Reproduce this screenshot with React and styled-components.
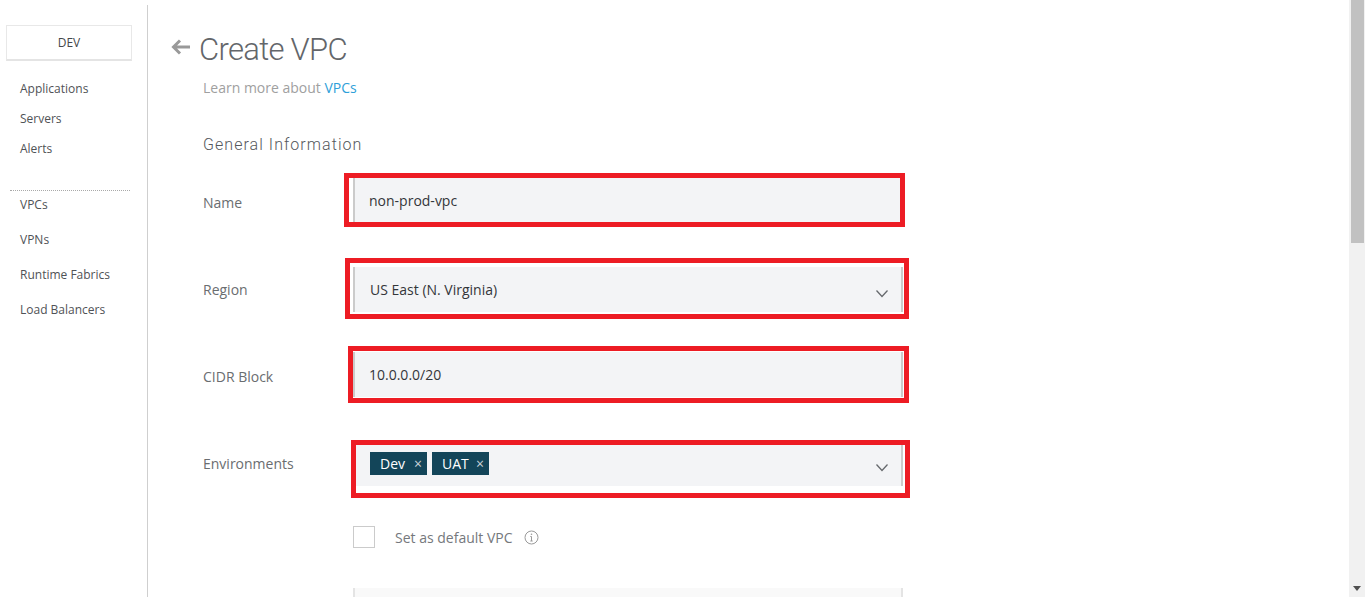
import React from "react";
import styled, { createGlobalStyle } from "styled-components";

const Global = createGlobalStyle`
  html, body { margin: 0; padding: 0; height: 100%; background: #fff; overflow: hidden; }
  #root { height: 100%; }
  * { box-sizing: border-box; }
`;

const Page = styled.div`
  display: flex;
  height: 597px;
  width: 1365px;
  overflow: hidden;
  font-family: "Open Sans", sans-serif;
  color: #55585c;
`;

const Sidebar = styled.aside`
  flex: 0 0 148px;
  margin-top: 5px;
  padding: 20px 15px 0 6px;
  border-right: 1px solid #cfcfcf;
`;

const EnvBox = styled.div`
  width: 126px;
  height: 36px;
  display: flex;
  align-items: center;
  justify-content: center;
  font-size: 12px;
  color: #44474b;
  border: 1px solid #e8e8e8;
  border-bottom: 2px solid #e4e4e4;
  padding-bottom: 1px;
`;

const NavList = styled.nav`
  display: flex;
  flex-direction: column;
  margin-top: ${(p) => p.$top}px;
  padding-left: 14px;
`;

const NavItem = styled.a`
  height: ${(p) => p.$h}px;
  line-height: ${(p) => p.$h}px;
  font-size: 12px;
  color: #4f5256;
  white-space: nowrap;
`;

const Divider = styled.hr`
  width: 120px;
  margin: 26px 0 0 4px;
  border: 0;
  border-top: 1px dotted #a9a9a9;
`;

const Main = styled.main`
  flex: 1;
  padding: 29px 0 0 23px;
`;

const TitleRow = styled.div`
  display: flex;
  align-items: center;
  height: 40px;
`;

const BackIcon = styled.svg`
  width: 20px;
  height: 16px;
  margin-right: 8px;
  margin-top: -4px;
  color: #999;
`;

const Title = styled.h1`
  margin: 2px 0 0;
  font-family: "Roboto", sans-serif;
  font-weight: 300;
  font-size: 31px;
  letter-spacing: -0.7px;
  line-height: 40px;
  color: #63666a;
`;

const Body = styled.div`
  padding-left: 32px;
`;

const Learn = styled.p`
  margin: 9px 0 0;
  font-size: 14px;
  line-height: 20px;
  color: #a0a0a0;
`;

const LearnLink = styled.a`
  color: #2f9fd9;
`;

const Section = styled.h2`
  margin: 36px 0 0;
  font-family: "Roboto", sans-serif;
  font-weight: 300;
  font-size: 16px;
  letter-spacing: 1.05px;
  line-height: 22px;
  color: #55585c;
`;

const Row = styled.div`
  display: flex;
  align-items: center;
  height: 45px;
  margin-top: ${(p) => p.$top}px;
`;

const Label = styled.label`
  flex: 0 0 150px;
  margin-top: ${(p) => p.$drop || 0}px;
  font-size: 14px;
  color: #6a6d70;
`;

const Field = styled.div`
  position: relative;
  display: flex;
  align-items: center;
  width: 550px;
  height: 45px;
  padding: 0 12px 0 ${(p) => p.$pad}px;
  background: #f3f4f6;
  border-left: 2px solid #cbcbcb;
  border-right: 2px solid #cbcbcb;
  font-size: 14px;
  color: #33363a;
`;

const Highlight = styled.span`
  position: absolute;
  top: ${(p) => p.$t}px;
  right: ${(p) => p.$r}px;
  bottom: ${(p) => p.$b}px;
  left: ${(p) => p.$l}px;
  border: 5px solid #ed1c24;
  pointer-events: none;
`;

const Chevron = styled.svg`
  margin-left: auto;
  width: 14px;
  height: 9px;
  margin-top: 8px;
  color: #66696d;
`;

const Tag = styled.span`
  display: flex;
  align-items: center;
  justify-content: space-between;
  width: 57px;
  height: 23px;
  margin-right: 5px;
  padding: 0 5px 0 10px;
  background: #134559;
  color: #fff;
  font-size: 14px;
`;

const TagX = styled.span`
  font-size: 14px;
  color: #c9d3d8;
`;

const CheckRow = styled.div`
  display: flex;
  align-items: center;
  margin: 40px 0 0 150px;
  height: 22px;
`;

const Check = styled.span`
  width: 22px;
  height: 22px;
  margin-right: 20px;
  border: 1px solid #cbcbcb;
  background: #fff;
`;

const CheckLabel = styled.span`
  font-size: 14px;
  color: #75787c;
`;

const InfoIcon = styled.svg`
  width: 15px;
  height: 15px;
  margin-left: 11px;
  color: #9a9a9a;
`;

const NextField = styled.div`
  width: 550px;
  height: 60px;
  margin: 40px 0 0 150px;
  background: #f9f9f9;
  border-left: 2px solid #e4e4e4;
  border-right: 2px solid #e4e4e4;
`;

const ScrollTrack = styled.div`
  position: relative;
  flex: 0 0 16px;
  background: #f1f1f1;
`;

const ScrollThumb = styled.div`
  width: 13px;
  height: 243px;
  margin-left: 2px;
  background: #c1c1c1;
`;

const ScrollArrow = styled.svg`
  position: absolute;
  left: 4px;
  bottom: 6px;
  width: 8px;
  height: 5px;
  color: #505050;
`;

const ChevronDown = () => (
  <Chevron viewBox="0 0 14 9">
    <path d="M1.5 1.5 L7 7.5 L12.5 1.5" fill="none" stroke="currentColor" strokeWidth="1.3" />
  </Chevron>
);

export default function App() {
  return (
    <Page>
      <Global />
      <Sidebar>
        <EnvBox>DEV</EnvBox>
        <NavList $top={13}>
          <NavItem $h={30}>Applications</NavItem>
          <NavItem $h={30}>Servers</NavItem>
          <NavItem $h={30}>Alerts</NavItem>
        </NavList>
        <Divider />
        <NavList $top={-4}>
          <NavItem $h={35}>VPCs</NavItem>
          <NavItem $h={35}>VPNs</NavItem>
          <NavItem $h={35}>Runtime Fabrics</NavItem>
          <NavItem $h={35}>Load Balancers</NavItem>
        </NavList>
      </Sidebar>
      <Main>
        <TitleRow>
          <BackIcon viewBox="0 0 20 16">
            <path d="M19 8 H3 M9 1.5 L2.5 8 L9 14.5" fill="none" stroke="currentColor" strokeWidth="3" />
          </BackIcon>
          <Title>Create VPC</Title>
        </TitleRow>
        <Body>
          <Learn>
            Learn more about <LearnLink>VPCs</LearnLink>
          </Learn>
          <Section>General Information</Section>
          <Row $top={22}>
            <Label $drop={4}>Name</Label>
            <Field $pad={14}>
              non-prod-vpc
              <Highlight $t={-5} $r={-4} $b={-4} $l={-11} />
            </Field>
          </Row>
          <Row $top={44}>
            <Label>Region</Label>
            <Field $pad={15}>
              US East (N. Virginia)
              <ChevronDown />
              <Highlight $t={-9} $r={-8} $b={-7} $l={-10} />
            </Field>
          </Row>
          <Row $top={40}>
            <Label $drop={4}>CIDR Block</Label>
            <Field $pad={14}>
              10.0.0.0/20
              <Highlight $t={-6} $r={-8} $b={-6} $l={-7} />
            </Field>
          </Row>
          <Row $top={44}>
            <Label>Environments</Label>
            <Field $pad={15}>
              <Tag>
                Dev <TagX>×</TagX>
              </Tag>
              <Tag>
                UAT <TagX>×</TagX>
              </Tag>
              <ChevronDown />
              <Highlight $t={-1} $r={-9} $b={-12} $l={-4} />
            </Field>
          </Row>
          <CheckRow>
            <Check />
            <CheckLabel>Set as default VPC</CheckLabel>
            <InfoIcon viewBox="0 0 15 15">
              <circle cx="7.5" cy="7.5" r="6.5" fill="none" stroke="currentColor" strokeWidth="1" />
              <path d="M7.5 6.5 V11 M6.3 6.5 H7.5 M6.3 11 H8.7" fill="none" stroke="currentColor" strokeWidth="1" />
              <circle cx="7.5" cy="4.3" r="0.8" fill="currentColor" />
            </InfoIcon>
          </CheckRow>
          <NextField />
        </Body>
      </Main>
      <ScrollTrack>
        <ScrollThumb />
        <ScrollArrow viewBox="0 0 8 5">
          <path d="M0 0 H8 L4 5 Z" fill="currentColor" />
        </ScrollArrow>
      </ScrollTrack>
    </Page>
  );
}
